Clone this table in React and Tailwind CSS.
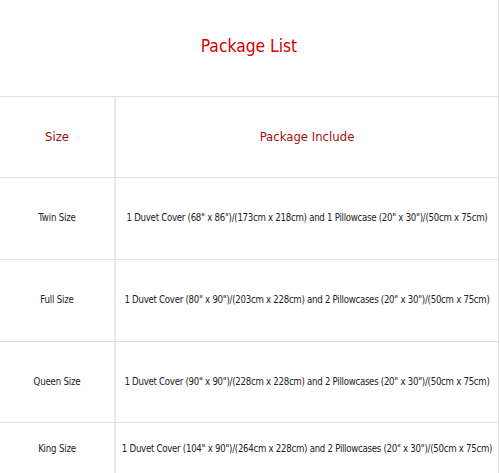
const ROWS = [
  ['Twin Size', '1 Duvet Cover (68" x 86")/(173cm x 218cm) and 1 Pillowcase (20" x 30")/(50cm x 75cm)', 'h-[82px]'],
  ['Full Size', '1 Duvet Cover (80" x 90")/(203cm x 228cm) and 2 Pillowcases (20" x 30")/(50cm x 75cm)', 'h-[82px]'],
  ['Queen Size', '1 Duvet Cover (90" x 90")/(228cm x 228cm) and 2 Pillowcases (20" x 30")/(50cm x 75cm)', 'h-[81px]'],
  ['King Size', '1 Duvet Cover (104" x 90")/(264cm x 228cm) and 2 Pillowcases (20" x 30")/(50cm x 75cm)', 'h-[54px]'],
]

export default function App() {
  return (
    <div className="w-[500px] h-[473px] overflow-hidden bg-white font-['DejaVu_Sans_Condensed','Liberation_Sans',sans-serif]">
      <div className="w-[499px] border-r border-[#e3e3e3]">
        <div className="h-[96px] flex items-center justify-center text-[17.3px] text-[#d40000] pb-[2px]">
          Package List
        </div>
        <div className="grid grid-cols-[116px_1fr] border-t border-[#e0e0e0] h-[81px]">
          <div className="flex items-center justify-center border-r-2 border-[#e8e8e8] text-[13px] text-[#a30d0d]">Size</div>
          <div className="flex items-center justify-center text-[13px] text-[#a30d0d]">Package Include</div>
        </div>
        {ROWS.map(([size, desc, h]) => (
          <div key={size} className={`grid grid-cols-[116px_1fr] border-t border-[#e0e0e0] ${h}`}>
            <div className="flex items-center justify-center border-r-2 border-[#e8e8e8] text-[9.6px] tracking-[-0.2px] text-[#222]">{size}</div>
            <div className="flex items-center justify-center text-[9.6px] tracking-[-0.28px] text-[#222] whitespace-nowrap">{desc}</div>
          </div>
        ))}
      </div>
    </div>
  )
}
